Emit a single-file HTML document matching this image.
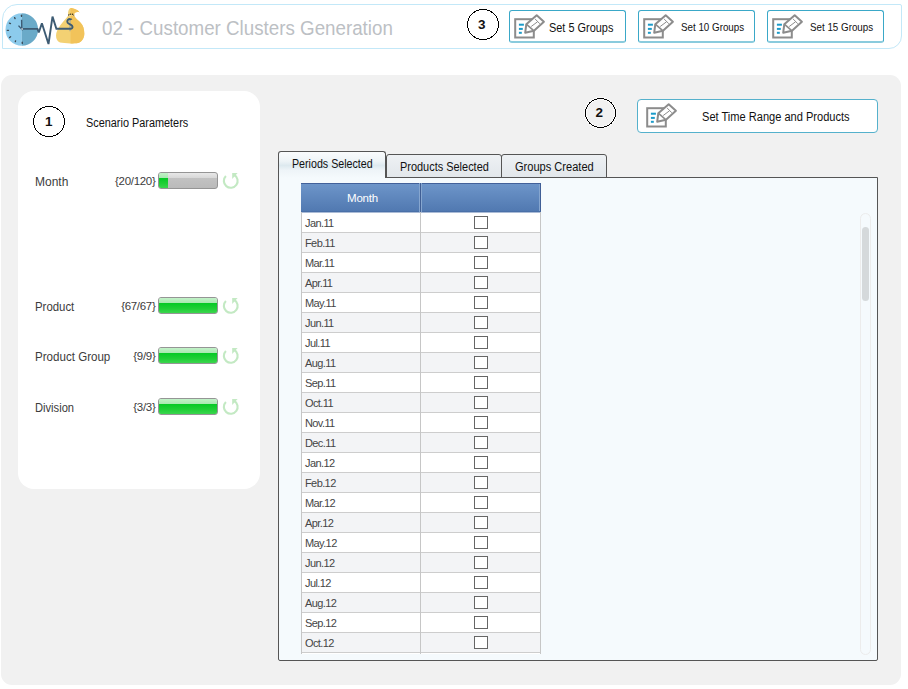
<!DOCTYPE html>
<html>
<head>
<meta charset="utf-8">
<style>
*{box-sizing:border-box;margin:0;padding:0}
html,body{width:908px;height:689px;overflow:hidden;background:#fff;font-family:"Liberation Sans",sans-serif;color:#222}
.abs{position:absolute}
.t{position:absolute;white-space:nowrap;line-height:1;transform-origin:0 0}
#hdr{position:absolute;left:2px;top:4px;width:900px;height:45px;border:1px solid #c3e8f8;border-radius:15px 2px 13px 0}
.circ{position:absolute;width:31px;height:31px;border:1.3px solid #111;border-radius:50%}
.hbtn{position:absolute;top:10px;width:117px;height:33px;border:1px solid #3aa8c8;border-bottom:2px solid #8acbdd;border-radius:3px;background:#fff}
.bbtn{position:absolute;border:1.4px solid #55b1cc;border-radius:4px;background:#fff}
#panel{position:absolute;left:1px;top:75px;width:900px;height:610px;background:#f1f1f1;border-radius:11px}
#card{position:absolute;left:18px;top:91px;width:242px;height:398px;background:#fff;border-radius:16px}
.bar{position:absolute;left:158px;width:60px;height:17px;border:1px solid #959595;border-radius:3px;overflow:hidden;background:linear-gradient(#e8e8e8 0,#d8d8d8 33%,#c2c2c2 34%,#bababa 100%)}
.bar .fill{position:absolute;left:0;top:0;bottom:0;background:linear-gradient(#c2f2c8 0,#a8e8b0 33%,#05c925 34%,#1fcf36 70%,#3bd64e 100%)}
.tab{position:absolute;border:1px solid #555;border-radius:3px 3px 0 0}
#content{position:absolute;left:278px;top:177px;width:600px;height:484px;border:1px solid #555;border-radius:0 0 2px 2px;background:#f5fafd}
#tbl{position:absolute;left:301px;top:183px;width:240px;height:471px;overflow:hidden}
.th{position:absolute;top:0;height:29px;background:linear-gradient(#6d95c9,#5179b1);border-top:1px solid #42619a;border-bottom:1px solid #4a70a8}
.thb{position:absolute;left:0;top:29px;width:240px;height:1px;background:#aabbd6}
.thd{position:absolute;left:119px;top:0;width:1px;height:29px;background:#3f5e94;box-shadow:-1px 0 0 #86a6cf,1px 0 0 #86a6cf}
.tr{position:absolute;left:0;width:240px;height:20px;background:#fff}
.tr.alt{background:#f3f4f6}
.tr span{position:absolute;left:4px;top:6px;font-size:11px;line-height:1;color:#454545;white-space:nowrap;letter-spacing:-0.6px}
.tr i{position:absolute;left:173px;top:4px;width:14px;height:13px;border:1px solid #666;background:#fff}
.hl{position:absolute;left:0;width:240px;height:1px;background:#cdcdcd}
.vl{position:absolute;top:29px;width:1px;height:442px;background:#c6c6c6}
#track{position:absolute;left:860px;top:213px;width:11px;height:442px;border:1px solid #ececec;border-radius:6px}
#thumb{position:absolute;left:862px;top:227px;width:7px;height:74px;background:#d5d9db;border-radius:4px}
</style>
</head>
<body>
<div id="hdr"></div>
<svg class="abs" style="left:0;top:0" width="100" height="50" viewBox="0 0 100 50">
<defs><clipPath id="rh"><rect x="70.6" y="0" width="30" height="50"/></clipPath></defs>
<path d="M21.8 13.2 A16.3 16.3 0 0 0 21.8 45.8 Z" fill="#8ccbec"/>
<path d="M21.8 13.2 A16.3 16.3 0 0 1 21.8 45.8 Z" fill="#6aaac8"/>
<g stroke="#3b4a55" stroke-width="1.3" stroke-linecap="round">
<path d="M21.5 15.2 L21.5 16.4"/><path d="M14.6 17.6 L15.1 18.6"/><path d="M9.4 23.1 L10.5 23.6"/><path d="M7.3 30.3 L8.5 30.3"/><path d="M9.6 37.5 L10.6 36.7"/><path d="M15.3 41.7 L15.6 40.8"/><path d="M22.3 43.4 L22.3 42.2"/>
</g>
<path d="M21.6 19.8 L21.8 29.2 L18.5 25.6" fill="none" stroke="#3d5b73" stroke-width="1.4"/>
<g id="bag">
<path d="M68.1 15.7 C66.5 18 63 21.5 60.5 25 C58 28.5 56 32 56 35.5 C56 39 57.5 41.5 60 42.6 C64 43.6 74 43.6 78 43 C82 42 84.3 38 84.3 33.6 C84.3 29 83 25 80.6 22.7 C78.5 20.5 75.5 18.5 74.2 15.7 Z" fill="#f3d173"/>
<path d="M68.2 15.6 C68 13 68 11 69 9.5 C69.8 8.2 71 7.8 72.3 8.3 C74.5 9 77.5 9.5 79.7 12.4 C78.5 11.8 76 11.8 74.5 12.9 C74.2 13.8 74.2 14.5 74.2 15.6 Z" fill="#f3d173"/>
</g>
<g clip-path="url(#rh)">
<path d="M68.1 15.7 C66.5 18 63 21.5 60.5 25 C58 28.5 56 32 56 35.5 C56 39 57.5 41.5 60 42.6 C64 43.6 74 43.6 78 43 C82 42 84.3 38 84.3 33.6 C84.3 29 83 25 80.6 22.7 C78.5 20.5 75.5 18.5 74.2 15.7 Z" fill="#f2c35a"/>
<path d="M68.2 15.6 C68 13 68 11 69 9.5 C69.8 8.2 71 7.8 72.3 8.3 C74.5 9 77.5 9.5 79.7 12.4 C78.5 11.8 76 11.8 74.5 12.9 C74.2 13.8 74.2 14.5 74.2 15.6 Z" fill="#f2c35a"/>
</g>
<path d="M68.4 15.4 C69 14.3 69.7 14.1 71.5 14.1 C72.7 14.1 73.4 14.4 73.9 15.4" fill="none" stroke="#2d2d25" stroke-width="1.1" stroke-dasharray="1.3 0.7"/>
<path d="M70 19 L70 31.2" stroke="#7d93a3" stroke-width="0.8"/>
<path d="M21.8 28.9 L37.5 28.9 L38.8 32.5 L41.9 23.2 L48.5 44 L52.5 16.6 L56.4 28.8 L70.5 28.8 C71.2 28.8 71.7 28.7 72.1 28.2 C72.9 27.4 72.6 25.7 71 24.8 L68.5 23.5 C67 22.6 67 20.6 68 19.7 C69 18.8 71 18.9 71.6 19.8" fill="none" stroke="#3d5b73" stroke-width="1.9" stroke-linejoin="miter" stroke-miterlimit="2.5"/>
<rect x="21.4" y="28.2" width="1.4" height="1.6" fill="#fff" opacity="0.8"/>
</svg>
<div class="t" style="left:102px;top:18px;font-size:20.5px;color:#bcc0c4;transform:scaleX(0.915);">02 - Customer Clusters Generation</div>
<svg class="abs" style="left:460px;top:0" width="50" height="50" shape-rendering="crispEdges"><ellipse cx="23" cy="24.5" rx="15.5" ry="15" fill="none" stroke="#000" stroke-width="1"/></svg>
<div class="t" style="left:478px;top:18px;font-size:13.5px;color:#111;"><b>3</b></div>
<div class="hbtn" style="left:509px"></div>
<svg class="abs" style="left:509.5px;top:10px" width="40" height="34" viewBox="0 0 40 34">
<rect x="5.2" y="9.2" width="18.6" height="18.3" fill="none" stroke="#8c8c8c" stroke-width="2"/>
<rect x="8.9" y="13.7" width="5" height="2" fill="#1b9bc9"/>
<rect x="8.9" y="17.9" width="3.9" height="2" fill="#1b9bc9"/>
<rect x="8.9" y="21.8" width="2.9" height="2" fill="#1b9bc9"/>
<path d="M16.3 14.2 L26.7 5.2 L33.9 11.8 L24 20.8 L15.2 22.8 Z" fill="#fff" stroke="#8c8c8c" stroke-width="2" stroke-linejoin="round"/>
<path d="M16.3 14.2 L24 20.8" stroke="#8c8c8c" stroke-width="1.6" fill="none"/>
<path d="M25.1 9 L29.8 13.7 M21.2 16.5 L27.5 11.8" stroke="#8c8c8c" stroke-width="1" fill="none"/>
</svg>
<div class="t" style="left:548.5px;top:22px;font-size:12px;color:#111;transform:scaleX(0.91);">Set 5 Groups</div>
<div class="hbtn" style="left:638px"></div>
<svg class="abs" style="left:638.5px;top:10px" width="40" height="34" viewBox="0 0 40 34">
<rect x="5.2" y="9.2" width="18.6" height="18.3" fill="none" stroke="#8c8c8c" stroke-width="2"/>
<rect x="8.9" y="13.7" width="5" height="2" fill="#1b9bc9"/>
<rect x="8.9" y="17.9" width="3.9" height="2" fill="#1b9bc9"/>
<rect x="8.9" y="21.8" width="2.9" height="2" fill="#1b9bc9"/>
<path d="M16.3 14.2 L26.7 5.2 L33.9 11.8 L24 20.8 L15.2 22.8 Z" fill="#fff" stroke="#8c8c8c" stroke-width="2" stroke-linejoin="round"/>
<path d="M16.3 14.2 L24 20.8" stroke="#8c8c8c" stroke-width="1.6" fill="none"/>
<path d="M25.1 9 L29.8 13.7 M21.2 16.5 L27.5 11.8" stroke="#8c8c8c" stroke-width="1" fill="none"/>
</svg>
<div class="t" style="left:680.5px;top:22px;font-size:11px;color:#111;transform:scaleX(0.89);">Set 10 Groups</div>
<div class="hbtn" style="left:767px"></div>
<svg class="abs" style="left:767.5px;top:10px" width="40" height="34" viewBox="0 0 40 34">
<rect x="5.2" y="9.2" width="18.6" height="18.3" fill="none" stroke="#8c8c8c" stroke-width="2"/>
<rect x="8.9" y="13.7" width="5" height="2" fill="#1b9bc9"/>
<rect x="8.9" y="17.9" width="3.9" height="2" fill="#1b9bc9"/>
<rect x="8.9" y="21.8" width="2.9" height="2" fill="#1b9bc9"/>
<path d="M16.3 14.2 L26.7 5.2 L33.9 11.8 L24 20.8 L15.2 22.8 Z" fill="#fff" stroke="#8c8c8c" stroke-width="2" stroke-linejoin="round"/>
<path d="M16.3 14.2 L24 20.8" stroke="#8c8c8c" stroke-width="1.6" fill="none"/>
<path d="M25.1 9 L29.8 13.7 M21.2 16.5 L27.5 11.8" stroke="#8c8c8c" stroke-width="1" fill="none"/>
</svg>
<div class="t" style="left:810px;top:22px;font-size:11px;color:#111;transform:scaleX(0.89);">Set 15 Groups</div>
<div id="panel"></div>
<div id="card"></div>
<svg class="abs" style="left:20px;top:100px" width="50" height="50" shape-rendering="crispEdges"><ellipse cx="29" cy="21.5" rx="15.5" ry="15" fill="none" stroke="#000" stroke-width="1"/></svg>
<div class="t" style="left:45px;top:115px;font-size:13.5px;color:#111;"><b>1</b></div>
<div class="t" style="left:86px;top:117px;font-size:12.3px;color:#111;transform:scaleX(0.885);">Scenario Parameters</div>
<div class="t" style="left:35px;top:176px;font-size:12px;color:#3c3c3c;">Month</div>
<div class="t" style="left:75px;width:80.5px;text-align:right;top:176px;font-size:11.5px;color:#3c3c3c;letter-spacing:-0.3px">{20/120}</div>
<div class="bar" style="top:172px"><div class="fill" style="width:9px"></div></div>
<svg class="abs" style="left:220px;top:170px" width="22" height="22" viewBox="0 0 22 22">
<path d="M5.9 6.0 A6.9 6.9 0 1 0 14.3 5.0" fill="none" stroke="#c3e9c3" stroke-width="2.1"/>
<path d="M12.2 2.9 L17.6 2.9 L12.2 9 Z" fill="#c3e9c3"/>
</svg>
<div class="t" style="left:35px;top:301px;font-size:12px;color:#3c3c3c;transform:scaleX(0.95);">Product</div>
<div class="t" style="left:75px;width:80.5px;text-align:right;top:301px;font-size:11.5px;color:#3c3c3c;letter-spacing:-0.3px">{67/67}</div>
<div class="bar" style="top:297px"><div class="fill" style="width:60px"></div></div>
<svg class="abs" style="left:220px;top:295px" width="22" height="22" viewBox="0 0 22 22">
<path d="M5.9 6.0 A6.9 6.9 0 1 0 14.3 5.0" fill="none" stroke="#c3e9c3" stroke-width="2.1"/>
<path d="M12.2 2.9 L17.6 2.9 L12.2 9 Z" fill="#c3e9c3"/>
</svg>
<div class="t" style="left:35px;top:351px;font-size:12px;color:#3c3c3c;transform:scaleX(0.965);">Product Group</div>
<div class="t" style="left:75px;width:80.5px;text-align:right;top:351px;font-size:11.5px;color:#3c3c3c;letter-spacing:-0.3px">{9/9}</div>
<div class="bar" style="top:347px"><div class="fill" style="width:60px"></div></div>
<svg class="abs" style="left:220px;top:345px" width="22" height="22" viewBox="0 0 22 22">
<path d="M5.9 6.0 A6.9 6.9 0 1 0 14.3 5.0" fill="none" stroke="#c3e9c3" stroke-width="2.1"/>
<path d="M12.2 2.9 L17.6 2.9 L12.2 9 Z" fill="#c3e9c3"/>
</svg>
<div class="t" style="left:35px;top:402px;font-size:12px;color:#3c3c3c;transform:scaleX(0.93);">Division</div>
<div class="t" style="left:75px;width:80.5px;text-align:right;top:402px;font-size:11.5px;color:#3c3c3c;letter-spacing:-0.3px">{3/3}</div>
<div class="bar" style="top:398px"><div class="fill" style="width:60px"></div></div>
<svg class="abs" style="left:220px;top:396px" width="22" height="22" viewBox="0 0 22 22">
<path d="M5.9 6.0 A6.9 6.9 0 1 0 14.3 5.0" fill="none" stroke="#c3e9c3" stroke-width="2.1"/>
<path d="M12.2 2.9 L17.6 2.9 L12.2 9 Z" fill="#c3e9c3"/>
</svg>
<svg class="abs" style="left:580px;top:90px" width="50" height="50" shape-rendering="crispEdges"><ellipse cx="20.5" cy="23" rx="15" ry="14.5" fill="none" stroke="#fff" stroke-width="3" opacity="0.6"/><ellipse cx="20.5" cy="23" rx="15" ry="14.5" fill="none" stroke="#000" stroke-width="1"/></svg>
<div class="t" style="left:595.5px;top:106px;font-size:13.5px;color:#111;"><b>2</b></div>
<div class="bbtn" style="left:637px;top:99px;width:241px;height:34px"></div>
<svg class="abs" style="left:642px;top:99px" width="40" height="34" viewBox="0 0 40 34">
<rect x="5.2" y="9.2" width="18.6" height="18.3" fill="none" stroke="#8c8c8c" stroke-width="2"/>
<rect x="8.9" y="13.7" width="5" height="2" fill="#1b9bc9"/>
<rect x="8.9" y="17.9" width="3.9" height="2" fill="#1b9bc9"/>
<rect x="8.9" y="21.8" width="2.9" height="2" fill="#1b9bc9"/>
<path d="M16.3 14.2 L26.7 5.2 L33.9 11.8 L24 20.8 L15.2 22.8 Z" fill="#fff" stroke="#8c8c8c" stroke-width="2" stroke-linejoin="round"/>
<path d="M16.3 14.2 L24 20.8" stroke="#8c8c8c" stroke-width="1.6" fill="none"/>
<path d="M25.1 9 L29.8 13.7 M21.2 16.5 L27.5 11.8" stroke="#8c8c8c" stroke-width="1" fill="none"/>
</svg>
<div class="t" style="left:702px;top:111px;font-size:12.3px;color:#111;transform:scaleX(0.9);">Set Time Range and Products</div>
<div id="content"></div>
<div id="tbl">
<div class="th" style="left:0;width:120px"></div><div class="th" style="left:120px;width:120px;border-right:1px solid #3f5e96;box-shadow:inset -1px 0 0 #86a6cf"></div><div class="thd"></div>
<div class="t" style="left:46px;top:10px;font-size:11.5px;color:#fff;letter-spacing:-0.2px">Month</div>
<div class="tr" style="top:29px;height:20px"><span>Jan.11</span><i></i></div><div class="thb"></div>
<div class="tr alt" style="top:49px"><span>Feb.11</span><i></i></div>
<div class="tr" style="top:69px"><span>Mar.11</span><i></i></div>
<div class="tr alt" style="top:89px"><span>Apr.11</span><i></i></div>
<div class="tr" style="top:109px"><span>May.11</span><i></i></div>
<div class="tr alt" style="top:129px"><span>Jun.11</span><i></i></div>
<div class="tr" style="top:149px"><span>Jul.11</span><i></i></div>
<div class="tr alt" style="top:169px"><span>Aug.11</span><i></i></div>
<div class="tr" style="top:189px"><span>Sep.11</span><i></i></div>
<div class="tr alt" style="top:209px"><span>Oct.11</span><i></i></div>
<div class="tr" style="top:229px"><span>Nov.11</span><i></i></div>
<div class="tr alt" style="top:249px"><span>Dec.11</span><i></i></div>
<div class="tr" style="top:269px"><span>Jan.12</span><i></i></div>
<div class="tr alt" style="top:289px"><span>Feb.12</span><i></i></div>
<div class="tr" style="top:309px"><span>Mar.12</span><i></i></div>
<div class="tr alt" style="top:329px"><span>Apr.12</span><i></i></div>
<div class="tr" style="top:349px"><span>May.12</span><i></i></div>
<div class="tr alt" style="top:369px"><span>Jun.12</span><i></i></div>
<div class="tr" style="top:389px"><span>Jul.12</span><i></i></div>
<div class="tr alt" style="top:409px"><span>Aug.12</span><i></i></div>
<div class="tr" style="top:429px"><span>Sep.12</span><i></i></div>
<div class="tr alt" style="top:449px"><span>Oct.12</span><i></i></div>
<div class="tr" style="top:469px"><span>Nov.12</span><i></i></div>
<div class="hl" style="top:49px"></div>
<div class="hl" style="top:69px"></div>
<div class="hl" style="top:89px"></div>
<div class="hl" style="top:109px"></div>
<div class="hl" style="top:129px"></div>
<div class="hl" style="top:149px"></div>
<div class="hl" style="top:169px"></div>
<div class="hl" style="top:189px"></div>
<div class="hl" style="top:209px"></div>
<div class="hl" style="top:229px"></div>
<div class="hl" style="top:249px"></div>
<div class="hl" style="top:269px"></div>
<div class="hl" style="top:289px"></div>
<div class="hl" style="top:309px"></div>
<div class="hl" style="top:329px"></div>
<div class="hl" style="top:349px"></div>
<div class="hl" style="top:369px"></div>
<div class="hl" style="top:389px"></div>
<div class="hl" style="top:409px"></div>
<div class="hl" style="top:429px"></div>
<div class="hl" style="top:449px"></div>
<div class="hl" style="top:469px"></div>
<div class="hl" style="top:489px"></div>
<div class="vl" style="left:0"></div><div class="vl" style="left:119px"></div><div class="vl" style="left:239px"></div>
</div>
<div id="track"></div><div id="thumb"></div>
<div class="tab" style="left:386px;top:154px;width:116px;height:24px;background:linear-gradient(#eef1f4,#e2e7eb)"></div>
<div class="tab" style="left:501px;top:154px;width:106px;height:24px;background:linear-gradient(#eef1f4,#e2e7eb)"></div>
<div class="tab" style="left:278px;top:151px;width:108px;height:27px;border-bottom:none;background:linear-gradient(#fafcfd 0,#eef4f7 35%,#dde9ef 52%,#eef4f8 70%,#f5fafd 100%)"></div>
<div class="abs" style="left:386px;top:177px;width:221px;height:1px;background:#555"></div>
<div class="t" style="left:291.5px;top:158px;font-size:12.3px;color:#111;transform:scaleX(0.868);">Periods Selected</div>
<div class="t" style="left:399.5px;top:161px;font-size:12.3px;color:#111;transform:scaleX(0.89);">Products Selected</div>
<div class="t" style="left:514.5px;top:161px;font-size:12.3px;color:#111;transform:scaleX(0.9);">Groups Created</div>
</body>
</html>
